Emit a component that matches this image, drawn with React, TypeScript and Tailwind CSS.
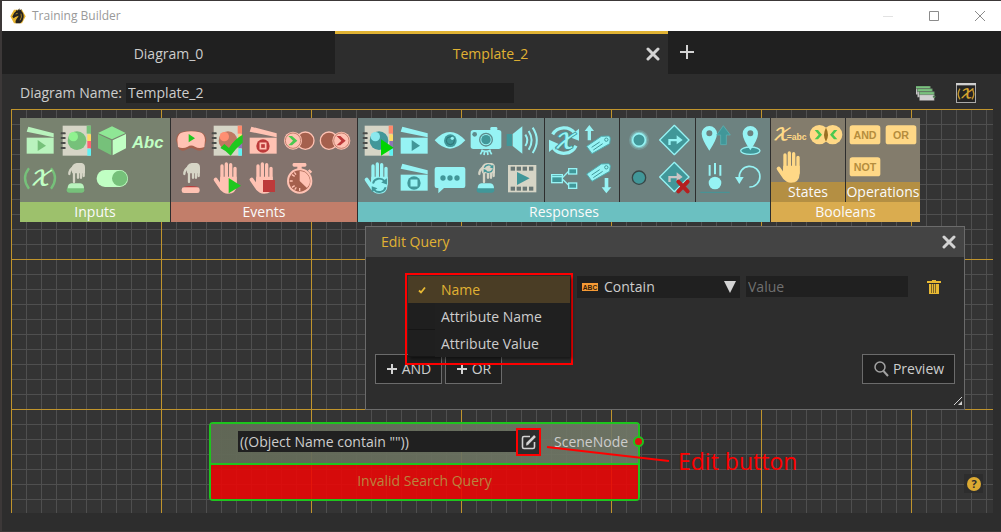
import type { ReactNode } from "react";

type Tone = { light: string; dark: string; shine: string };

const green: Tone = { light: "#b9f3bd", dark: "#76c17a", shine: "#90f290" };
const pink: Tone = { light: "#ffc2b3", dark: "#a5604d", shine: "#ff8f72" };
const cyan: Tone = { light: "#96f3f4", dark: "#419799", shine: "#8ce8ee" };
const gold: Tone = { light: "#ffd886", dark: "#b58d3d", shine: "#ffe9b5" };

const CREAM = "#d6d5c6";
const GO = "#1fc81f";
const STOP = "#bd3a3a";
const SCRIPT_X = "italic bold 60px 'DejaVu Math TeX Gyre', 'Liberation Serif', serif";
const ICON_FONT = "'Liberation Sans', sans-serif";

function Glyph({ children }: { children: ReactNode }) {
  return (
    <svg viewBox="0 0 96 96" className="block size-8 overflow-visible" aria-hidden="true">
      {children}
    </svg>
  );
}

function Clapper({ t, stop }: { t: Tone; stop?: boolean }) {
  return (
    <Glyph>
      <path d="M13 5 89 25V37L8 20Z" fill={t.light} />
      <rect x="8" y="38" width="81" height="48" fill={t.light} />
      {!stop && <path d="M41 45V78L66 62Z" fill={t.dark} />}
      {stop && (
        <>
          <circle cx="48" cy="63" r="20" fill={t === pink ? STOP : t.dark} />
          <rect x="40" y="55" width="16" height="16" fill={t === pink ? STOP : t.light} stroke={t.light} strokeWidth="5" />
        </>
      )}
    </Glyph>
  );
}

function Book({ t, children }: { t: Tone; children?: ReactNode }) {
  return (
    <Glyph>
      <rect x="8" y="2" width="84" height="90" fill={CREAM} />
      <rect x="80" y="2" width="13" height="24" fill={t === green ? t.dark : "#ff8a6c"} />
      <rect x="82" y="28" width="11" height="20" fill="#ffdc63" />
      <rect x="82" y="48" width="11" height="22" fill={t === green ? "#ff6472" : "#8e72b8"} />
      <rect x="82" y="71" width="11" height="21" fill="#5ff2f4" />
      {[22, 36, 51, 66].map((y) => (
        <rect key={y} x="2" y={y} width="15" height="6" rx="2" fill="#4b4d4a" />
      ))}
      <circle cx="51" cy="47" r="28" fill={t === pink ? "#c07862" : t.dark} />
      <circle cx="40" cy="35" r="14" fill={t.shine} />
      {children}
    </Glyph>
  );
}

function PressHand({ t, sync, flat }: { t: Tone; sync?: boolean; flat?: boolean }) {
  return (
    <Glyph>
      <path d="M37 34 34 24Q34 6 50 3H65Q75 5 75 17V34Z" fill={CREAM} />
      <path d="M42 30V60M54 30V47M63 30V47M71 30V42M42 14Q28 22 28 36" fill="none" stroke={CREAM} strokeWidth="7" strokeLinecap="round" />
      {sync && (
        <g fill="none" stroke={t.dark} strokeWidth="4">
          <path d="M43 17A13 12 0 0 1 66 14M68 22A13 12 0 0 1 46 27" />
          <path d="M70 8V20L59 16ZM41 32V21L51 25Z" fill={t.dark} stroke="none" />
        </g>
      )}
      {flat ? (
        <>
          <path d="M26 75Q46 69 70 75V80H26Z" fill={STOP} />
          <rect x="20" y="76" width="54" height="17" rx="7" fill={t.light} />
        </>
      ) : (
        <>
          <rect x="20" y="76" width="53" height="16" rx="7" fill={t.dark} />
          <path d="M23 79Q23 65 34 64H61Q72 65 72 79Z" fill={t.light} />
        </>
      )}
    </Glyph>
  );
}

function OpenHand({ t, children }: { t: Tone; children?: ReactNode }) {
  return (
    <Glyph>
      <g stroke={t.light} strokeWidth="10" strokeLinecap="round" fill="none">
        <path d="M33 12V60M46 6V60M59 8V60M72 19V65" />
        <path d="M14 53 32 79" strokeWidth="12" />
      </g>
      <path d="M28 44H77V68Q76 95 51 95Q37 95 29 84L26 70Z" fill={t.light} />
      {children}
    </Glyph>
  );
}

function Rings({ t, enter }: { t: Tone; enter?: boolean }) {
  const lit = enter ? 30 : 67;
  const dim = enter ? 67 : 30;
  return (
    <Glyph>
      <circle cx={dim} cy="47" r="26" fill={t.dark} stroke={t.light} strokeWidth="4" />
      <circle cx={lit} cy="47" r="27" fill={t.light} />
      <circle cx={lit} cy="47" r="23" fill="none" stroke={t.dark} strokeWidth="2" />
      <path
        d={`M${lit - 14} 33H${lit - 3}L${lit + 13} 47 ${lit - 3} 61H${lit - 14}L${lit} 47Z`}
        fill={enter ? "#4bc84f" : STOP}
      />
    </Glyph>
  );
}

function Diamond({ off }: { off?: boolean }) {
  return (
    <Glyph>
      <path d="M46 1 90 45 46 89 2 45Z" fill={cyan.dark} stroke={cyan.light} strokeWidth="4" strokeLinejoin="round" />
      <path d="M28 60V42H53V31L71 45 53 58V49H35V60Z" fill={off ? "#c9c5c5" : cyan.light} />
      {off && <path d="M58 59 86 88M86 59 58 88" stroke="#b51f1f" strokeWidth="12" strokeLinecap="round" />}
    </Glyph>
  );
}

function Tag({ down }: { down?: boolean }) {
  return (
    <Glyph>
      <g transform={down ? "translate(0 -28)" : undefined}>
        <path d="M8 64 52 34 73 33Q79 34 79 41L77 56 24 86Z" fill={cyan.light} stroke="#4fa9ac" strokeWidth="3" />
        <circle cx="67" cy="44" r="5" fill="none" stroke={cyan.dark} strokeWidth="3" />
        <path d="M23 67 47 51M28 75 56 56" stroke={cyan.dark} strokeWidth="3" />
      </g>
      {down ? (
        <path d="M62 48H73V76H82L67 94 53 76H62Z" fill={cyan.light} />
      ) : (
        <path d="M11 46H21V18H30L16 0 2 18H11Z" fill={cyan.light} />
      )}
    </Glyph>
  );
}

function Gate({ label }: { label: string }) {
  return (
    <Glyph>
      <rect x="2" y="19" width="92" height="57" rx="8" fill={gold.light} />
      <text x="48" y="59" textAnchor="middle" fontSize="32" fontWeight="700" fontFamily={ICON_FONT} fill={gold.dark}>
        {label}
      </text>
    </Glyph>
  );
}

function SyncArrows({ cx, cy, s }: { cx: number; cy: number; s: number }) {
  return (
    <g transform={`translate(${cx} ${cy}) scale(${s})`}>
      <path d="M-20-6A21 21 0 0 1 16-14M20 6A21 21 0 0 1-16 14" fill="none" stroke={cyan.dark} strokeWidth="6" />
      <path d="M24-22V-3L6-9ZM-24 22V3L-6 9Z" fill={cyan.dark} />
    </g>
  );
}

type Tool = { name: string; icon: ReactNode };

const inputs: Tool[] = [
  { name: "Video", icon: <Clapper t={green} /> },
  { name: "Catalog", icon: <Book t={green} /> },
  {
    name: "Object",
    icon: (
      <Glyph>
        <path d="M48 4 89 24 48 43 6 24Z" fill="#8fe795" />
        <path d="M6 27 46 46V91L6 70Z" fill="#76c17a" />
        <path d="M50 46 90 27V70L50 91Z" fill="#c0ffc3" />
      </Glyph>
    ),
  },
  {
    name: "Text",
    icon: (
      <Glyph>
        <text x="47" y="68" textAnchor="middle" fontSize="50" fontStyle="italic" fontWeight="700" fontFamily={ICON_FONT} fill="#c0ffc3">
          Abc
        </text>
      </Glyph>
    ),
  },
  {
    name: "Variable",
    icon: (
      <Glyph>
        <path d="M15 19Q-9 49 15 80M81 19Q105 49 81 80" fill="none" stroke="#76c17a" strokeWidth="7" />
        <text x="48" y="70" textAnchor="middle" fill="#c0ffc3" style={{ font: SCRIPT_X }}>
          𝒳
        </text>
      </Glyph>
    ),
  },
  { name: "Press", icon: <PressHand t={green} /> },
  {
    name: "Toggle",
    icon: (
      <Glyph>
        <rect x="2" y="24" width="94" height="51" rx="25" fill="#c0ffc3" />
        <circle cx="71" cy="49" r="23" fill="#76c17a" />
      </Glyph>
    ),
  },
];

const events: Tool[] = [
  {
    name: "Headset",
    icon: (
      <Glyph>
        <path d="M3 46Q5 24 20 21Q48 14 76 21Q91 24 94 46L86 73Q72 82 59 72Q48 66 37 72Q24 82 12 73Z" fill="#a5604d" />
        <path d="M7 44Q9 25 24 22Q48 15 74 22Q88 25 90 44L88 66Q72 72 60 65Q48 58 38 65Q24 73 9 66Z" fill="#ffc2b3" />
        <path d="M41 27V52L60 40Z" fill={GO} />
      </Glyph>
    ),
  },
  {
    name: "Object checked",
    icon: (
      <Book t={pink}>
        <path d="M28 69 40 57 54 69Q70 42 95 29V53Q73 71 59 92Q44 76 28 69Z" fill={GO} />
      </Book>
    ),
  },
  { name: "Video stopped", icon: <Clapper t={pink} stop /> },
  { name: "Enter", icon: <Rings t={pink} enter /> },
  { name: "Exit", icon: <Rings t={pink} /> },
  { name: "Pressed", icon: <PressHand t={pink} flat /> },
  {
    name: "Grab start",
    icon: (
      <OpenHand t={pink}>
        <path d="M53 48V94L90 71Z" fill={GO} />
      </OpenHand>
    ),
  },
  {
    name: "Grab stop",
    icon: (
      <OpenHand t={pink}>
        <rect x="48" y="54" width="36" height="36" fill={STOP} />
      </OpenHand>
    ),
  },
  {
    name: "Timer",
    icon: (
      <Glyph>
        <rect x="29" y="3" width="41" height="11" rx="4" fill="#ffc2b3" />
        <rect x="43" y="12" width="13" height="10" fill="#ffc2b3" />
        <path d="M77 24 85 32" stroke="#ffc2b3" strokeWidth="7" />
        <circle cx="50" cy="57" r="35" fill="#a5604d" stroke="#ffc2b3" strokeWidth="6" />
        <path d="M50 57V27A30 30 0 0 1 72 78Z" fill="#ffc2b3" />
        <path d="M20 57H29M50 87V78M27 38 35 43M27 76 35 71M34 31 39 38M35 83 40 76" stroke="#ffc2b3" strokeWidth="4" />
      </Glyph>
    ),
  },
];

const mediaResponses: Tool[] = [
  {
    name: "Show object",
    icon: (
      <Book t={cyan}>
        <path d="M57 43V92L95 68Z" fill="#00d500" />
      </Book>
    ),
  },
  { name: "Play video", icon: <Clapper t={cyan} /> },
  {
    name: "Visibility",
    icon: (
      <Glyph>
        <path d="M2 46Q48-4 94 46Q48 96 2 46Z" fill={cyan.light} />
        <circle cx="49" cy="47" r="19" fill={cyan.dark} />
        <circle cx="49" cy="47" r="12" fill="none" stroke="#2e7375" strokeWidth="3" />
        <circle cx="55" cy="40" r="5" fill={cyan.light} />
      </Glyph>
    ),
  },
  {
    name: "Snapshot",
    icon: (
      <Glyph>
        <rect x="61" y="6" width="21" height="13" rx="4" fill={cyan.light} />
        <rect x="2" y="15" width="92" height="57" rx="8" fill={cyan.light} />
        <circle cx="14" cy="28" r="7" fill="#5d8b8c" />
        <circle cx="48" cy="44" r="19" fill="none" stroke="#5d8b8c" strokeWidth="4" />
        <circle cx="48" cy="44" r="14" fill={cyan.dark} />
        <path d="M34 75Q48 83 62 75M37 77 31 88M44 78 42 90M52 78 54 90M59 77 65 88" stroke={cyan.light} strokeWidth="5" fill="none" />
      </Glyph>
    ),
  },
  {
    name: "Sound",
    icon: (
      <Glyph>
        <rect x="2" y="27" width="16" height="36" fill={cyan.dark} />
        <path d="M20 27 49 4V86L20 63Z" fill={cyan.light} />
        <path d="M58 29Q70 46 58 63M68 18Q86 46 68 74M80 8Q105 46 80 84" fill="none" stroke={cyan.light} strokeWidth="6" />
      </Glyph>
    ),
  },
  {
    name: "Reset grab",
    icon: (
      <OpenHand t={cyan}>
        <SyncArrows cx={52} cy={70} s={0.95} />
      </OpenHand>
    ),
  },
  { name: "Stop video", icon: <Clapper t={cyan} stop /> },
  {
    name: "Message",
    icon: (
      <Glyph>
        <path d="M8 15H88Q94 15 94 21V72Q94 78 88 78H30L13 94V78H8Q2 78 2 72V21Q2 15 8 15Z" fill={cyan.light} />
        <circle cx="27" cy="48" r="8" fill={cyan.dark} />
        <circle cx="48" cy="48" r="8" fill={cyan.dark} />
        <circle cx="69" cy="48" r="8" fill={cyan.dark} />
      </Glyph>
    ),
  },
  { name: "Reset press", icon: <PressHand t={cyan} sync /> },
  {
    name: "Film",
    icon: (
      <Glyph>
        <rect x="6" y="9" width="85" height="82" fill={CREAM} />
        {[14, 32, 50, 69].map((x) => (
          <g key={x} fill="#687674">
            <rect x={x} y="14" width="13" height="12" />
            <rect x={x} y="74" width="13" height="12" />
          </g>
        ))}
        <path d="M33 30V69L71 49Z" fill={cyan.dark} />
      </Glyph>
    ),
  },
];

const dataResponses: Tool[] = [
  {
    name: "Set variable",
    icon: (
      <Glyph>
        <path d="M14 28A40 40 0 0 1 80 24M84 62A40 40 0 0 1 16 69" fill="none" stroke={cyan.light} strokeWidth="10" />
        <path d="M93 11V47L62 35ZM3 81V44L32 57Z" fill={cyan.light} />
        <text x="48" y="68" textAnchor="middle" fill={cyan.light} stroke={cyan.dark} strokeWidth="5" paintOrder="stroke" style={{ font: SCRIPT_X }}>
          𝒳
        </text>
      </Glyph>
    ),
  },
  { name: "Attach tag", icon: <Tag /> },
  {
    name: "Branch",
    icon: (
      <Glyph>
        <path d="M43 47 62 28M43 51 62 70" stroke={cyan.light} strokeWidth="4" />
        <g fill={cyan.dark} stroke={cyan.light} strokeWidth="4">
          <rect x="11" y="38" width="32" height="24" />
          <rect x="62" y="20" width="24" height="16" />
          <rect x="62" y="63" width="24" height="16" />
        </g>
        <path d="M10 44H43" stroke={cyan.light} strokeWidth="4" />
      </Glyph>
    ),
  },
  { name: "Detach tag", icon: <Tag down /> },
];

const stateResponses: Tool[] = [
  {
    name: "Highlight",
    icon: (
      <Glyph>
        <circle cx="48" cy="45" r="30" fill={cyan.light} opacity="0.2" />
        <circle cx="48" cy="45" r="25" fill={cyan.light} opacity="0.4" />
        <circle cx="48" cy="45" r="19" fill={cyan.dark} stroke={cyan.light} strokeWidth="5" />
      </Glyph>
    ),
  },
  { name: "Navigate", icon: <Diamond /> },
  {
    name: "Remove highlight",
    icon: (
      <Glyph>
        <circle cx="48" cy="47" r="20" fill={cyan.dark} stroke="#374646" strokeWidth="4" />
      </Glyph>
    ),
  },
  { name: "Stop navigation", icon: <Diamond off /> },
];

const moveResponses: Tool[] = [
  {
    name: "Move up",
    icon: (
      <Glyph>
        <path fillRule="evenodd" d="M31 77Q8 42 8 26A23 23 0 0 1 54 26Q54 42 31 77ZM31 34A9 9 0 1 0 31 16A9 9 0 0 0 31 34Z" fill={cyan.light} />
        <path d="M65 59H82V30H94L73 2 53 30H65Z" fill={cyan.dark} stroke="#5bb9bb" strokeWidth="2" />
      </Glyph>
    ),
  },
  {
    name: "Place",
    icon: (
      <Glyph>
        <ellipse cx="46" cy="77" rx="29" ry="11" fill={cyan.dark} stroke={cyan.light} strokeWidth="4" />
        <path fillRule="evenodd" d="M46 76Q23 42 23 26A23 23 0 0 1 69 26Q69 42 46 76ZM46 34A9 9 0 1 0 46 16A9 9 0 0 0 46 34Z" fill={cyan.light} />
      </Glyph>
    ),
  },
  {
    name: "Drop",
    icon: (
      <Glyph>
        <circle cx="48" cy="63" r="19" fill={cyan.light} />
        <path d="M32 9V41M48 3V37M64 9V41" stroke={cyan.light} strokeWidth="6" />
        <path d="M4 91H92" stroke={cyan.dark} strokeWidth="3" />
      </Glyph>
    ),
  },
  {
    name: "Undo",
    icon: (
      <Glyph>
        <path d="M13 48A31 31 0 1 1 43 75" fill="none" stroke={cyan.light} strokeWidth="5" />
        <path d="M0 45H26L13 66Z" fill={cyan.light} />
      </Glyph>
    ),
  },
];

const states: Tool[] = [
  {
    name: "Variable equals",
    icon: (
      <Glyph>
        <text x="20" y="64" textAnchor="middle" fill={gold.light} style={{ font: SCRIPT_X, fontSize: 50 }}>
          𝒳
        </text>
        <text x="68" y="64" textAnchor="middle" fontSize="26" fontWeight="700" fontFamily={ICON_FONT} fill={gold.light}>
          =abc
        </text>
      </Glyph>
    ),
  },
  {
    name: "Overlap",
    icon: (
      <Glyph>
        <circle cx="28" cy="47" r="29" fill={gold.light} />
        <circle cx="68" cy="47" r="29" fill={gold.light} />
        <path d="M48 26Q60 47 48 68Q36 47 48 26Z" fill="#9b6f22" />
        <path d="M14 33H24L36 47 24 61H14L26 47Z" fill="#4bc84f" />
        <path d="M82 33H72L60 47 72 61H82L70 47Z" fill="#4bc84f" />
      </Glyph>
    ),
  },
  { name: "Grabbed", icon: <OpenHand t={gold} /> },
];

const operations: Tool[] = [
  { name: "And", icon: <Gate label="AND" /> },
  { name: "Or", icon: <Gate label="OR" /> },
  { name: "Not", icon: <Gate label="NOT" /> },
];

function Tools({ items, className }: { items: Tool[]; className: string }) {
  return (
    <div className={`grid content-start gap-x-1 ${className}`}>
      {items.map((tool) => (
        <button key={tool.name} type="button" aria-label={tool.name} className="size-8">
          {tool.icon}
        </button>
      ))}
    </div>
  );
}

function GroupLabel({ children, className }: { children: ReactNode; className: string }) {
  return <div className={`h-5 text-center leading-5 text-[#fafafa] ${className}`}>{children}</div>;
}

function Palette() {
  return (
    <div className="flex w-max gap-px bg-[#2d2d2d]">
      <section>
        <Tools items={inputs} className="h-[84px] w-[150px] grid-cols-[repeat(4,32px)] gap-y-[5px] bg-[#78826f] px-1 pt-[7px]" />
        <GroupLabel className="bg-[#9dc16c]">Inputs</GroupLabel>
      </section>
      <section>
        <Tools items={events} className="h-[84px] w-[186px] grid-cols-[repeat(5,32px)] gap-y-[5px] bg-[#83736d] px-1 pt-[7px]" />
        <GroupLabel className="bg-[#c27e6a]">Events</GroupLabel>
      </section>
      <section>
        <div className="flex gap-px">
          <Tools items={mediaResponses} className="h-[84px] w-[186px] grid-cols-[repeat(5,32px)] gap-y-[5px] bg-[#6d8280] px-1 pt-[7px]" />
          <Tools items={dataResponses} className="h-[84px] w-[74px] grid-cols-[repeat(2,32px)] gap-y-[5px] bg-[#6d8280] px-[3px] pt-[7px]" />
          <Tools items={stateResponses} className="h-[84px] w-[75px] grid-cols-[repeat(2,32px)] gap-y-[5px] bg-[#6d8280] px-[3px] pt-[7px]" />
          <Tools items={moveResponses} className="h-[84px] w-[74px] grid-cols-[repeat(2,32px)] gap-y-[5px] bg-[#6d8280] px-[3px] pt-[7px]" />
        </div>
        <GroupLabel className="bg-[#6bc0c1]">Responses</GroupLabel>
      </section>
      <section>
        <div className="flex gap-px">
          <div>
            <Tools items={states} className="h-16 w-[74px] grid-cols-[repeat(2,32px)] bg-[#837c6c] px-[3px] pt-px" />
            <GroupLabel className="bg-[#b48f43]">States</GroupLabel>
          </div>
          <div>
            <Tools items={operations} className="h-16 w-[74px] grid-cols-[repeat(2,32px)] bg-[#837c6c] px-[3px] pt-px" />
            <GroupLabel className="bg-[#b48f43]">Operations</GroupLabel>
          </div>
        </div>
        <GroupLabel className="bg-[#daac4f]">Booleans</GroupLabel>
      </section>
    </div>
  );
}

function CrossIcon() {
  return (
    <svg viewBox="0 0 14 14" className="size-3.5" aria-hidden="true">
      <path d="M2 2 12 12M12 2 2 12" stroke="#d3d3d3" strokeWidth="3" strokeLinecap="round" />
    </svg>
  );
}

function PlusIcon() {
  return (
    <svg viewBox="0 0 12 12" className="size-3" aria-hidden="true">
      <path d="M6 1V11M1 6H11" stroke="#d3d3d3" strokeWidth="2" />
    </svg>
  );
}

function TitleBar() {
  return (
    <header className="flex h-[30px] items-center bg-white pl-2">
      <svg viewBox="0 0 48 48" className="size-4" aria-hidden="true">
        <path d="M12 5H36L47 25 36 46H12L1 25Z" fill="#e9b52e" />
        <path
          d="M17 46Q15 38 20 32Q24 28 26 23L16 27 11 31 7 26Q10 15 18 10L20 5 23 8 28 1 29 7 35 4 34 9Q42 16 41 28Q39 40 31 46Z"
          fill="#26231f"
        />
        <path d="M17 18 23 16M33 17Q37 27 30 37" stroke="#e9b52e" strokeWidth="2" fill="none" />
      </svg>
      <h1 className="ml-1.5 flex-1 text-xs text-[#999]">Training Builder</h1>
      <div className="flex items-center gap-9 pr-4">
        <button type="button" aria-label="Minimize">
          <svg viewBox="0 0 10 10" className="size-2.5" aria-hidden="true">
            <path d="M0 5.5H10" stroke="#e2e2e2" />
          </svg>
        </button>
        <button type="button" aria-label="Maximize">
          <svg viewBox="0 0 10 10" className="size-2.5" aria-hidden="true">
            <path d="M.5.5H9.5V9.5H.5Z" fill="none" stroke="#8b8b8b" />
          </svg>
        </button>
        <button type="button" aria-label="Close">
          <svg viewBox="0 0 10 10" className="size-2.5" aria-hidden="true">
            <path d="M0 0 10 10M10 0 0 10" stroke="#8b8b8b" />
          </svg>
        </button>
      </div>
    </header>
  );
}

function Tabs() {
  return (
    <nav className="grid h-[43px] grid-cols-3 bg-[#202020]">
      <button type="button" className="pt-0.5">
        Diagram_0
      </button>
      <div className="flex items-center border-t-[3px] border-[#e0b233] bg-[#2d2d2d] pr-2">
        <button type="button" className="flex-1 text-[#e0b233]">
          Template_2
        </button>
        <button type="button" aria-label="Close tab">
          <CrossIcon />
        </button>
      </div>
      <div className="flex items-center pb-px pl-3">
        <button type="button" aria-label="Add tab">
          <svg viewBox="0 0 14 14" className="size-3.5" aria-hidden="true">
            <path d="M7 0V14M0 7H14" stroke="#d3d3d3" strokeWidth="2" />
          </svg>
        </button>
      </div>
    </nav>
  );
}

function NameBar() {
  return (
    <div className="flex h-[35px] items-center pt-0.5 pr-[25px] pl-[18px]">
      <label htmlFor="diagram-name" className="w-[106px]">
        Diagram Name:
      </label>
      <input id="diagram-name" defaultValue="Template_2" className="h-5 w-[388px] bg-[#202020] px-0.5 outline-none" />
      <div className="ml-auto flex items-center gap-5">
        <button type="button" aria-label="Templates">
          <svg viewBox="0 0 60 60" className="size-5" aria-hidden="true">
            <g stroke="#2d2d2d" strokeWidth="1">
              <path d="M-2 9H43V35H-2Z" fill="#d0d0d0" />
              <path d="M-2 9H43V17H-2Z" fill="#7ac17e" />
              <path d="M4 17H49V43H4Z" fill="#d0d0d0" />
              <path d="M4 17H49V26H4Z" fill="#7ac17e" />
              <path d="M10 26H55V53H10Z" fill="#d0d0d0" />
              <path d="M10 26H55V35H10Z" fill="#7ac17e" />
            </g>
            <circle cx="54" cy="41" r="3" fill="#2d2d2d" stroke="#7ac17e" strokeWidth="2" />
          </svg>
        </button>
        <button type="button" aria-label="Variables">
          <svg viewBox="0 0 60 60" className="size-5" aria-hidden="true">
            <rect x="1.5" y="1.5" width="57" height="57" fill="#242424" stroke="#a9a9a9" strokeWidth="3" />
            <rect width="60" height="7" fill="#cfcfcf" />
            <path d="M12 17Q1 33 12 49M48 17Q59 33 48 49" fill="none" stroke="#c0942c" strokeWidth="4" />
            <text x="30" y="45" textAnchor="middle" fill="#d3a22e" style={{ font: SCRIPT_X, fontSize: 38 }}>
              𝒳
            </text>
          </svg>
        </button>
      </div>
    </div>
  );
}

function MenuItem({ children }: { children: ReactNode }) {
  return (
    <button type="button" role="menuitemradio" aria-checked="false" className="flex h-[27px] w-full items-center">
      <span className="h-full w-[27px] border-b border-[#161616] bg-[#1f1f1f]" />
      <span className="pl-1.5">{children}</span>
    </button>
  );
}

function QueryDialog() {
  return (
    <section aria-label="Edit Query" className="absolute top-[117px] left-[354px] w-[600px] border border-[#6b6b6b] bg-[#2d2d2d]">
      <header className="flex h-[30px] items-center bg-[#444] pr-2 pl-[15px]">
        <h2 className="flex-1 text-[#e0b233]">Edit Query</h2>
        <button type="button" aria-label="Close">
          <CrossIcon />
        </button>
      </header>
      <div className="flex items-start pt-[19px] pr-[23px] pl-[39px]">
        <div className="relative h-[22px] w-[172px]">
          <div role="menu" aria-label="Field" className="absolute -top-[3px] left-0 z-10 h-[92px] w-[168px] border-2 border-[#ff0000]">
            <div className="m-px mb-0 bg-[#202020] shadow-[2px_2px_3px_rgba(0,0,0,0.5)]">
              <button type="button" role="menuitemradio" aria-checked="true" className="flex h-[27px] w-full items-center bg-[#4a3d25] text-[#e0b233]">
                <span className="flex w-[33px] pl-2.5">
                  <svg viewBox="0 0 8 8" className="size-2" aria-hidden="true">
                    <path d="M1 4.5 3 6.5 7 1.5" fill="none" stroke="#e8b933" strokeWidth="1.8" />
                  </svg>
                </span>
                Name
              </button>
              <MenuItem>Attribute Name</MenuItem>
              <MenuItem>Attribute Value</MenuItem>
            </div>
          </div>
        </div>
        <div className="relative">
          <select aria-label="Condition" className="block h-[22px] w-[163px] appearance-none bg-[#202020] pl-[27px] outline-none">
            <option>Contain</option>
          </select>
          <svg viewBox="0 0 48 24" className="pointer-events-none absolute top-[7px] left-[5px] h-2 w-4" aria-hidden="true">
            <rect width="48" height="24" fill="#f59a35" />
            <text x="24" y="20" textAnchor="middle" fontSize="20" fontWeight="700" fontFamily={ICON_FONT} fill="#33200a">
              ABC
            </text>
          </svg>
          <svg viewBox="0 0 12 12" className="pointer-events-none absolute top-[5px] right-1 size-3" aria-hidden="true">
            <path d="M0 0H12L6 12Z" fill="#d3d3d3" />
          </svg>
        </div>
        <input aria-label="Value" placeholder="Value" className="ml-1.5 h-[21px] w-[162px] bg-[#202020] px-0.5 outline-none placeholder:text-[#707070]" />
        <button type="button" aria-label="Delete condition" className="mt-1 ml-auto">
          <svg viewBox="0 0 14 14" className="size-3.5" aria-hidden="true">
            <path d="M0 1H5V0H9V1H14V3H0Z" fill="#e8b933" />
            <path d="M2 4H12V14H2Z" fill="#e8b933" />
            <path d="M4.5 4V13M6.5 4V13M8.5 4V13" stroke="#7b6327" />
          </svg>
        </button>
      </div>
      <footer className="flex gap-[3px] px-[9px] pt-14 pb-[25px]">
        <button type="button" className="flex h-[30px] w-[67px] items-center justify-center gap-1 border border-[#6b6b6b] bg-[#202020]">
          <PlusIcon />
          AND
        </button>
        <button type="button" className="flex h-[30px] w-[57px] items-center justify-center gap-1 border border-[#6b6b6b] bg-[#202020]">
          <PlusIcon />
          OR
        </button>
        <button type="button" className="ml-auto flex h-[30px] w-[93px] items-center justify-center gap-1 border border-[#6b6b6b] bg-[#202020]">
          <svg viewBox="0 0 16 16" className="size-4" fill="none" aria-hidden="true">
            <circle cx="7" cy="6" r="5" stroke="#a2a2a2" strokeWidth="1.5" />
            <path d="M10.5 10 15 15" stroke="#a2a2a2" strokeWidth="2" />
          </svg>
          Preview
        </button>
      </footer>
      <svg viewBox="0 0 8 8" className="absolute right-0.5 bottom-1 size-2" aria-hidden="true">
        <path d="M0 8 8 0" stroke="#d3d3d3" />
        <path d="M4 8H8V4Z" fill="#d3d3d3" />
      </svg>
    </section>
  );
}

function SceneNode() {
  return (
    <section aria-label="SceneNode" className="absolute top-[313px] left-[198px] w-[431px] rounded border-2 border-[#1ec41e]">
      <div className="flex h-[41px] items-center border-b-2 border-[#1ec41e] bg-gradient-to-r from-[#626957]/95 to-[#727968]/90 pr-2.5 pb-1 pl-[27px]">
        <input aria-label="Query" defaultValue={'((Object Name contain ""))'} className="h-[21px] min-w-0 flex-1 bg-[#202020] px-0.5 outline-none" />
        <button type="button" aria-label="Edit" className="flex h-7 w-[25px] items-center justify-center border-2 border-[#ff0000] bg-[#2d2d2d]">
          <svg viewBox="0 0 16 16" className="size-4" fill="none" stroke="#d3d3d3" aria-hidden="true">
            <path d="M9 2.5H3Q1.5 2.5 1.5 4V13Q1.5 14.5 3 14.5H12Q13.5 14.5 13.5 13V8" strokeWidth="1.6" />
            <path d="M6 10 14 2" strokeWidth="2.5" />
            <path d="M5 11.5 5.5 9 7.5 11Z" fill="#d3d3d3" stroke="none" />
          </svg>
        </button>
        <span className="ml-[13px] w-[74px]">SceneNode</span>
      </div>
      <p className="h-[34px] bg-[#e80707]/90 text-center leading-8 text-[#b9853f]">Invalid Search Query</p>
      <span className="absolute top-3 -right-1.5 size-[11px] rounded-full border-2 border-[#1ec41e] bg-[#e01010]" />
    </section>
  );
}

export default function App() {
  return (
    <div className="flex min-h-screen flex-col border-t border-b border-l-2 border-[#3c3838] bg-[#2d2d2d] font-['Open_Sans','Noto_Sans',sans-serif] text-sm leading-5 text-[#cdcdcd]">
      <TitleBar />
      <Tabs />
      <NameBar />
      <main className="relative mr-2 mb-[18px] ml-[9px] flex-1 overflow-hidden bg-[#343434] bg-[linear-gradient(#c0942c_1px,transparent_1px),linear-gradient(90deg,#c0942c_1px,transparent_1px),linear-gradient(#4f4f4f_1px,transparent_1px),linear-gradient(90deg,#4f4f4f_1px,transparent_1px)] bg-[size:150px_150px,150px_150px,15px_15px,15px_15px] p-[9px]">
        <Palette />
        <QueryDialog />
        <SceneNode />
        <svg viewBox="0 0 122 16" className="absolute top-[337px] left-[536px] h-4 w-[122px]" aria-hidden="true">
          <path d="M0 1 122 15" stroke="#ff0000" strokeWidth="2" />
        </svg>
        <p className="absolute top-[336px] left-[667px] text-[23px] leading-8 text-[#ff0000]">Edit button</p>
        <button type="button" aria-label="Help" className="absolute right-2.5 bottom-5 flex size-[19px] items-center justify-center bg-[#2d2d2d]">
          <svg viewBox="0 0 14 14" className="size-3.5" aria-hidden="true">
            <circle cx="7" cy="7" r="7" fill="#dba932" />
            <text x="7" y="11" textAnchor="middle" fontSize="11" fontWeight="700" fill="#2d2d2d">
              ?
            </text>
          </svg>
        </button>
      </main>
    </div>
  );
}
